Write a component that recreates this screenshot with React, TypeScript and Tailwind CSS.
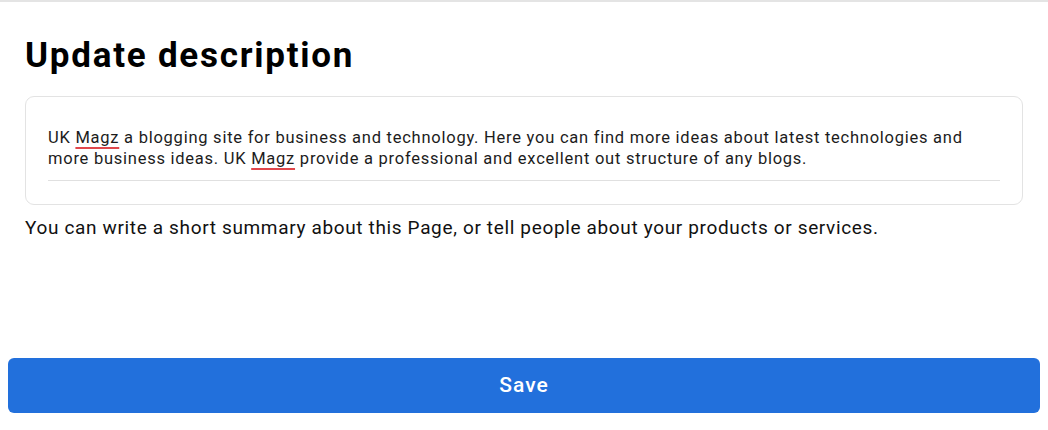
import React from "react";

export default function App() {
  return (
    <div className="w-[1048px] h-[430px] bg-white border-t-2 border-[#e4e4e4] overflow-hidden" style={{ fontFamily: "Roboto, 'Noto Sans', sans-serif" }}>
      <div className="px-[25px] pt-[32px]">
        <h1 className="text-[35px] leading-[44px] font-bold text-black tracking-[1.75px]">Update description</h1>
        <div className="mt-[18px] border border-[#e3e3e3] rounded-[9px] px-[22px] pt-[30px] pb-[23px]">
          <p className="text-[16.5px] leading-[21px] text-[#1c1c1c] tracking-[0.75px] pb-[11px] border-b border-[#e0e0e0]">
            UK <span className="underline decoration-[#e0474c] decoration-2 underline-offset-[4px]">Magz</span> a blogging site for business and technology. Here you can find more ideas about latest technologies and more business ideas. UK <span className="underline decoration-[#e0474c] decoration-2 underline-offset-[4px]">Magz</span> provide a professional and excellent out structure of any blogs.
          </p>
        </div>
        <p className="mt-[10px] text-[19px] leading-[26px] text-[#111] tracking-[0.65px]">You can write a short summary about this Page, or tell people about your products or services.</p>
      </div>
      <div className="px-[8px] mt-[117px]">
        <button className="w-full h-[55px] bg-[#2270dc] rounded-[6px] text-white text-[21px] font-medium tracking-[1px] flex items-center justify-center">Save</button>
      </div>
    </div>
  );
}
